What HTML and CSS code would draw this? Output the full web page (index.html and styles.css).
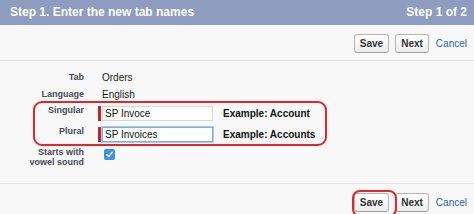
FILE: index.html
```html
<!DOCTYPE html>
<html lang="en">
<head>
  <meta charset="UTF-8">
  <meta name="viewport" content="width=device-width, initial-scale=1.0">
  <title>New Tab Names</title>
  <link rel="stylesheet" href="styles.css">
</head>
<body>

  <div class="wizard">
    <div class="header">
      <h2>Step 1. Enter the new tab names</h2>
      <span class="step">Step 1 of 2</span>
    </div>

    <div class="toolbar">
      <button class="btn">Save</button>
      <button class="btn">Next</button>
      <a href="#" class="cancel">Cancel</a>
    </div>

    <div class="form">
      <div class="row">
        <div class="label">Tab</div>
        <div class="value text">Orders</div>
      </div>
      <div class="row">
        <div class="label">Language</div>
        <div class="value text">English</div>
      </div>
      <div class="row input-row">
        <div class="label">Singular</div>
        <div class="value">
          <span class="required"></span>
          <input type="text" value="SP Invoce">
          <span class="example">Example: Account</span>
        </div>
      </div>
      <div class="row input-row">
        <div class="label">Plural</div>
        <div class="value">
          <span class="required"></span>
          <input type="text" value="SP Invoices" class="focused">
          <span class="example">Example: Accounts</span>
        </div>
      </div>
      <div class="row check-row">
        <div class="label">Starts with<br>vowel sound</div>
        <div class="value">
          <span class="checkbox">
            <svg width="11" height="11" viewBox="0 0 11 11"><path d="M2.8 5.7 L4.7 7.6 L8.3 3.3" fill="none" stroke="#fff" stroke-width="1.4" stroke-linecap="round" stroke-linejoin="round"/></svg>
          </span>
        </div>
      </div>
    </div>

    <div class="toolbar footer">
      <button class="btn">Save</button>
      <button class="btn">Next</button>
      <a href="#" class="cancel">Cancel</a>
    </div>

    <!-- annotations drawn over the screenshot -->
    <div class="ring ring-names"></div>
    <div class="ring ring-save"></div>
  </div>

</body>
</html>
```

FILE: styles.css
```css
* {
  margin: 0;
  padding: 0;
  box-sizing: border-box;
}

body {
  width: 474px;
  height: 214px;
  overflow: hidden;
  background: #f8f8f8;
  font-family: 'Liberation Sans', Arial, sans-serif;
}

.wizard {
  position: relative;
  height: 214px;
}

.header {
  display: flex;
  justify-content: space-between;
  align-items: center;
  height: 25px;
  padding: 0 7px 1px 10px;
  background: #8d9cbf;
  color: #fff;
  font-size: 12px;
  font-weight: bold;
}

.header h2 {
  font-size: 12px;
}

.toolbar {
  display: flex;
  justify-content: flex-end;
  align-items: flex-start;
  height: 36px;
  padding: 9px 7px 0 0;
  border-bottom: 1px solid #e3e3e3;
}

.toolbar.footer {
  border-bottom: none;
  border-top: 1px solid #e3e3e3;
  height: 31px;
}

.btn {
  height: 19px;
  padding: 0 5px;
  margin-right: 6px;
  border: 1px solid #b6b6b6;
  border-bottom-color: #a0a0a0;
  border-radius: 3px;
  background: linear-gradient(#ffffff, #ececec);
  color: #333;
  font-family: 'Liberation Sans', Arial, sans-serif;
  font-size: 10px;
  font-weight: bold;
}

.cancel {
  margin-left: 1px;
  line-height: 19px;
  font-size: 10px;
  color: #2a65a8;
  text-decoration: none;
}

.form {
  height: 122px;
  padding-top: 8px;
}

.row {
  display: flex;
  height: 17px;
}

.label {
  width: 84px;
  text-align: right;
  font-size: 9px;
  font-weight: bold;
  line-height: 17px;
  color: #4a4a56;
}

.value {
  display: flex;
  align-items: flex-start;
  margin-left: 14px;
}

.value.text {
  padding-left: 4px;
  font-size: 10px;
  line-height: 17px;
  color: #222;
}

.input-row {
  height: 21px;
}

.input-row .label {
  line-height: 15px;
}

.input-row .value {
  padding-top: 3px;
}

.required {
  width: 3px;
  height: 15px;
  margin-right: 1px;
  background: #c0252b;
}

input {
  width: 111px;
  height: 15px;
  padding: 0 2px;
  border: 1px solid #d6d6d6;
  background: #fff;
  font-family: 'Liberation Sans', Arial, sans-serif;
  font-size: 10px;
  color: #111;
  outline: none;
}

input.focused {
  border-color: #76aee8;
  box-shadow: 0 0 0 1px #a9cdf2;
}

.example {
  margin-left: 10px;
  font-size: 10px;
  font-weight: bold;
  line-height: 15px;
  color: #111;
}

.check-row {
  height: 36px;
}

.check-row .label {
  padding-top: 3px;
  line-height: 9.5px;
}

.checkbox {
  display: block;
  width: 11px;
  height: 11px;
  margin: 4px 0 0 6px;
  border-radius: 2px;
  background: #3d8ff0;
}

.checkbox svg {
  display: block;
}

.ring {
  position: absolute;
  border: 2px solid #e1262c;
  border-radius: 9px;
}

.ring-names {
  left: 33px;
  top: 101px;
  width: 294px;
  height: 45px;
}

.ring-save {
  left: 352px;
  top: 190px;
  width: 45px;
  height: 27px;
  border-radius: 8px;
}
```
